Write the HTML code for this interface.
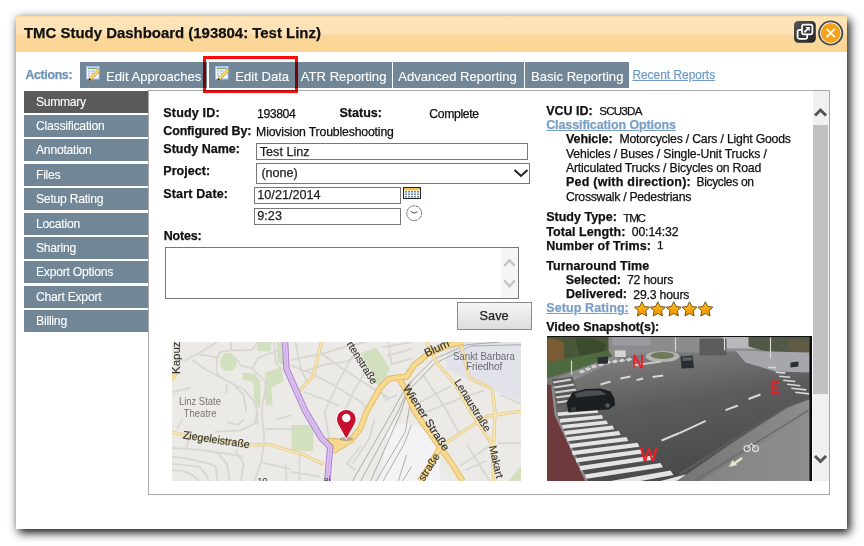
<!DOCTYPE html>
<html><head><meta charset="utf-8"><style>
html,body{margin:0;padding:0;width:864px;height:546px;overflow:hidden;background:#fff;}
body{position:relative;font-family:"Liberation Sans",sans-serif;}
.a{position:absolute;}
.t{position:absolute;line-height:1;white-space:nowrap;-webkit-text-stroke:0.25px currentColor;}
</style></head><body>
<div class="a" style="left:16px;top:16px;width:831px;height:513px;background:#fff;box-shadow:3px 4px 9px rgba(0,0,0,0.88),0 0 8px rgba(0,0,0,0.16);"></div>
<div class="a" style="left:16px;top:16px;width:831px;height:36px;background:linear-gradient(#fbd8a0 0px,#fde3b7 1.6px,#fce2b5 17px,#fbd79b 20.5px,#fad595 35px);"></div>
<div class="t" style="left:24.00px;top:25.55px;font-size:14.94px;font-weight:700;color:#111;">TMC Study Dashboard (193804: Test Linz)</div>
<svg class="a" style="left:794px;top:20.7px" width="22" height="22" viewBox="0 0 22 22">
<defs><linearGradient id="rg" x1="0" y1="0" x2="1" y2="1"><stop offset="0" stop-color="#5c5c5c"/><stop offset="0.5" stop-color="#383838"/><stop offset="1" stop-color="#262626"/></linearGradient></defs>
<rect x="0" y="0" width="21.8" height="21.7" rx="4.2" fill="url(#rg)"/>
<rect x="3.6" y="8.8" width="9.6" height="9" rx="1.8" fill="none" stroke="#fff" stroke-width="1.7"/>
<rect x="8" y="3.6" width="10.4" height="9.8" rx="1.8" fill="#3a3a3a" stroke="#fff" stroke-width="1.7"/>
<path d="M10.3 11.2 L14 7.6" fill="none" stroke="#fff" stroke-width="1.9"/>
<path d="M11.4 5.9 L15.8 5.9 L15.8 10.3 Z" fill="#fff"/>
</svg>
<svg class="a" style="left:818px;top:20px" width="26" height="26" viewBox="0 0 26 26">
<circle cx="12.7" cy="13" r="11.6" fill="#fff" stroke="#4a4a4a" stroke-width="1.9"/>
<circle cx="12.7" cy="13" r="9.9" fill="#f4a21c"/>
<path d="M8.6 8.9 L16.8 17.1 M16.8 8.9 L8.6 17.1" stroke="#fff" stroke-width="1.6"/>
</svg>
<div class="t" style="left:25.40px;top:69.19px;font-size:12.3px;font-weight:700;color:#6b93b8;letter-spacing:-0.3px;">Actions:</div>
<div class="a" style="left:80px;top:62px;width:127px;height:25.6px;background:#718797;"></div>
<svg class="a" style="left:86px;top:66.3px" width="15" height="15" viewBox="0 0 15 15">
<rect x="0.5" y="0.5" width="12.5" height="12.5" fill="#f8fbff" stroke="#a8c0ec" stroke-width="1"/>
<rect x="1.8" y="1.6" width="10" height="1.4" fill="#7aa868"/>
<g fill="#98acd4"><rect x="2.2" y="4.4" width="1.5" height="1.5"/><rect x="2.2" y="6.7" width="1.5" height="1.5"/><rect x="2.2" y="9" width="1.5" height="1.5"/></g>
<g fill="#b8c8e6"><rect x="4.8" y="4.4" width="4" height="1.4"/><rect x="4.8" y="6.7" width="3" height="1.4"/></g>
<rect x="1.5" y="3.6" width="10.5" height="0.6" fill="#c8d4ec"/>
<path d="M4.4 12.9 L12.4 4.9" stroke="#d89a3a" stroke-width="3.4" stroke-linecap="round"/>
<path d="M4.6 12.5 L12.2 5" stroke="#f6dc7c" stroke-width="1.8" stroke-linecap="round"/>
<path d="M2.6 14.6 L3.2 12 L5.2 14 Z" fill="#2a2a2a"/>
</svg>
<div class="t" style="left:106.00px;top:69.91px;font-size:13.1px;color:#fff;-webkit-text-stroke:0.1px #fff;">Edit Approaches</div>
<div class="a" style="left:209px;top:62px;width:89px;height:25.6px;background:#718797;"></div>
<svg class="a" style="left:215.3px;top:66.3px" width="15" height="15" viewBox="0 0 15 15">
<rect x="0.5" y="0.5" width="12.5" height="12.5" fill="#f8fbff" stroke="#a8c0ec" stroke-width="1"/>
<rect x="1.8" y="1.6" width="10" height="1.4" fill="#7aa868"/>
<g fill="#98acd4"><rect x="2.2" y="4.4" width="1.5" height="1.5"/><rect x="2.2" y="6.7" width="1.5" height="1.5"/><rect x="2.2" y="9" width="1.5" height="1.5"/></g>
<g fill="#b8c8e6"><rect x="4.8" y="4.4" width="4" height="1.4"/><rect x="4.8" y="6.7" width="3" height="1.4"/></g>
<rect x="1.5" y="3.6" width="10.5" height="0.6" fill="#c8d4ec"/>
<path d="M4.4 12.9 L12.4 4.9" stroke="#d89a3a" stroke-width="3.4" stroke-linecap="round"/>
<path d="M4.6 12.5 L12.2 5" stroke="#f6dc7c" stroke-width="1.8" stroke-linecap="round"/>
<path d="M2.6 14.6 L3.2 12 L5.2 14 Z" fill="#2a2a2a"/>
</svg>
<div class="t" style="left:235.30px;top:69.91px;font-size:13.1px;color:#fff;-webkit-text-stroke:0.1px #fff;">Edit Data</div>
<div class="a" style="left:298px;top:62px;width:94px;height:25.6px;background:#718797;"></div>
<div class="t" style="left:300.80px;top:69.91px;font-size:13.1px;color:#fff;-webkit-text-stroke:0.1px #fff;">ATR Reporting</div>
<div class="a" style="left:393px;top:62px;width:131px;height:25.6px;background:#718797;"></div>
<div class="t" style="left:398.20px;top:69.91px;font-size:13.1px;color:#fff;-webkit-text-stroke:0.1px #fff;">Advanced Reporting</div>
<div class="a" style="left:525px;top:62px;width:104px;height:25.6px;background:#718797;"></div>
<div class="t" style="left:531.00px;top:69.91px;font-size:13.1px;color:#fff;-webkit-text-stroke:0.1px #fff;">Basic Reporting</div>
<div class="t" style="left:632.40px;top:69.81px;font-size:11.92px;color:#6f9cc6;text-decoration:underline;">Recent Reports</div>
<div class="a" style="left:23.5px;top:90.6px;width:125px;height:22.1px;background:#5a5a5a;"></div>
<div class="t" style="left:36.00px;top:95.67px;font-size:12.2px;color:#fff;letter-spacing:-0.357px;-webkit-text-stroke:0.1px #fff;">Summary</div>
<div class="a" style="left:23.5px;top:115.0px;width:125px;height:22.1px;background:#718797;"></div>
<div class="t" style="left:36.00px;top:120.07px;font-size:12.2px;color:#fff;letter-spacing:-0.227px;-webkit-text-stroke:0.1px #fff;">Classification</div>
<div class="a" style="left:23.5px;top:139.4px;width:125px;height:22.1px;background:#718797;"></div>
<div class="t" style="left:36.00px;top:144.47px;font-size:12.2px;color:#fff;letter-spacing:-0.266px;-webkit-text-stroke:0.1px #fff;">Annotation</div>
<div class="a" style="left:23.5px;top:163.8px;width:125px;height:22.1px;background:#718797;"></div>
<div class="t" style="left:36.00px;top:168.87px;font-size:12.2px;color:#fff;letter-spacing:-0.264px;-webkit-text-stroke:0.1px #fff;">Files</div>
<div class="a" style="left:23.5px;top:188.2px;width:125px;height:22.1px;background:#718797;"></div>
<div class="t" style="left:36.00px;top:193.27px;font-size:12.2px;color:#fff;letter-spacing:-0.263px;-webkit-text-stroke:0.1px #fff;">Setup Rating</div>
<div class="a" style="left:23.5px;top:212.6px;width:125px;height:22.1px;background:#718797;"></div>
<div class="t" style="left:36.00px;top:217.67px;font-size:12.2px;color:#fff;letter-spacing:-0.270px;-webkit-text-stroke:0.1px #fff;">Location</div>
<div class="a" style="left:23.5px;top:237.0px;width:125px;height:22.1px;background:#718797;"></div>
<div class="t" style="left:36.00px;top:242.07px;font-size:12.2px;color:#fff;letter-spacing:-0.287px;-webkit-text-stroke:0.1px #fff;">Sharing</div>
<div class="a" style="left:23.5px;top:261.4px;width:125px;height:22.1px;background:#718797;"></div>
<div class="t" style="left:36.00px;top:266.47px;font-size:12.2px;color:#fff;letter-spacing:-0.254px;-webkit-text-stroke:0.1px #fff;">Export Options</div>
<div class="a" style="left:23.5px;top:285.8px;width:125px;height:22.1px;background:#718797;"></div>
<div class="t" style="left:36.00px;top:290.87px;font-size:12.2px;color:#fff;letter-spacing:-0.255px;-webkit-text-stroke:0.1px #fff;">Chart Export</div>
<div class="a" style="left:23.5px;top:310.2px;width:125px;height:22.1px;background:#718797;"></div>
<div class="t" style="left:36.00px;top:315.27px;font-size:12.2px;color:#fff;letter-spacing:-0.222px;-webkit-text-stroke:0.1px #fff;">Billing</div>
<div class="a" style="left:148px;top:90px;width:681.5px;height:404.5px;border:1px solid #a8a8a8;box-sizing:border-box;background:transparent;"></div>
<div class="t" style="left:163.30px;top:107.32px;font-size:12.5px;font-weight:700;color:#111;letter-spacing:0.180px;">Study ID:</div>
<div class="t" style="left:257.00px;top:107.53px;font-size:12.25px;color:#111;letter-spacing:-0.416px;">193804</div>
<div class="t" style="left:339.40px;top:107.32px;font-size:12.5px;font-weight:700;color:#111;letter-spacing:0.039px;">Status:</div>
<div class="t" style="left:429.20px;top:107.73px;font-size:12.25px;color:#111;letter-spacing:-0.347px;">Complete</div>
<div class="t" style="left:163.30px;top:124.82px;font-size:12.5px;font-weight:700;color:#111;letter-spacing:-0.167px;">Configured By:</div>
<div class="t" style="left:256.10px;top:125.53px;font-size:12.25px;color:#111;letter-spacing:-0.160px;">Miovision Troubleshooting</div>
<div class="t" style="left:163.30px;top:143.02px;font-size:12.5px;font-weight:700;color:#111;letter-spacing:0.030px;">Study Name:</div>
<div class="t" style="left:163.30px;top:164.52px;font-size:12.5px;font-weight:700;color:#111;letter-spacing:0.051px;">Project:</div>
<div class="t" style="left:163.30px;top:187.52px;font-size:12.5px;font-weight:700;color:#111;letter-spacing:0.149px;">Start Date:</div>
<div class="t" style="left:163.80px;top:230.02px;font-size:12.5px;font-weight:700;color:#111;letter-spacing:-0.219px;">Notes:</div>
<div class="a" style="left:256px;top:143.3px;width:271.5px;height:17px;border:1px solid #777;box-sizing:border-box;"></div>
<div class="t" style="left:259.80px;top:145.53px;font-size:12.6px;color:#222;">Test Linz</div>
<div class="a" style="left:256px;top:163px;width:274.3px;height:21px;border:1px solid #777;box-sizing:border-box;"></div>
<div class="t" style="left:261.40px;top:167.43px;font-size:12.6px;color:#222;">(none)</div>
<svg class="a" style="left:513px;top:168px" width="16" height="10" viewBox="0 0 16 10"><path d="M1.5 2 L8 8 L14.5 2" fill="none" stroke="#222" stroke-width="2"/></svg>
<div class="a" style="left:254.3px;top:187.1px;width:147.2px;height:17.2px;border:1px solid #777;box-sizing:border-box;"></div>
<div class="t" style="left:257.30px;top:189.17px;font-size:12.67px;color:#222;">10/21/2014</div>
<div class="a" style="left:254.3px;top:208.3px;width:147.2px;height:16.9px;border:1px solid #777;box-sizing:border-box;"></div>
<div class="t" style="left:257.30px;top:210.27px;font-size:12.67px;color:#222;">9:23</div>
<svg class="a" style="left:403px;top:187px" width="18" height="12" viewBox="0 0 18 12">
<rect x="0.5" y="0.5" width="17" height="11" fill="#f2f8fa" stroke="#222" stroke-width="1"/>
<rect x="1" y="1" width="16" height="2.4" fill="#f0c050"/>
<g fill="#6d8aa0"><rect x="2" y="4.0" width="2" height="1.5"/><rect x="5" y="4.0" width="2" height="1.5"/><rect x="8" y="4.0" width="2" height="1.5"/><rect x="11" y="4.0" width="2" height="1.5"/><rect x="14" y="4.0" width="2" height="1.5"/><rect x="2" y="6.5" width="2" height="1.5"/><rect x="5" y="6.5" width="2" height="1.5"/><rect x="8" y="6.5" width="2" height="1.5"/><rect x="11" y="6.5" width="2" height="1.5"/><rect x="14" y="6.5" width="2" height="1.5"/><rect x="2" y="9.0" width="2" height="1.5"/><rect x="5" y="9.0" width="2" height="1.5"/><rect x="8" y="9.0" width="2" height="1.5"/><rect x="11" y="9.0" width="2" height="1.5"/><rect x="14" y="9.0" width="2" height="1.5"/></g>
</svg>
<svg class="a" style="left:406px;top:204.5px" width="17" height="17" viewBox="0 0 17 17">
<circle cx="8.2" cy="8.2" r="7.4" fill="#fff" stroke="#555" stroke-width="0.9" stroke-dasharray="2.2 0.6"/>
<path d="M4.6 6.3 L8.2 8.2 L11.4 6.8" fill="none" stroke="#444" stroke-width="1"/>
</svg>
<div class="a" style="left:165.3px;top:247.3px;width:353.7px;height:52px;border:1px solid #777;box-sizing:border-box;"></div>
<div class="a" style="left:501.4px;top:248.3px;width:16.6px;height:50px;background:#f5f5f5;"></div>
<svg class="a" style="left:503px;top:257px" width="13" height="36" viewBox="0 0 13 36"><path d="M1.2 9 L6.5 3.3 L11.8 9 M1.2 23.5 L6.5 29.2 L11.8 23.5" fill="none" stroke="#c4c4c4" stroke-width="2.3"/></svg>
<div class="a" style="left:457.3px;top:302.2px;width:74.5px;height:28px;border:1px solid #8a8a8a;box-sizing:border-box;background:linear-gradient(#f6f6f6,#dedede);"></div>
<div class="t" style="left:479.60px;top:309.63px;font-size:12.72px;color:#222;">Save</div>
<div class="a" style="left:171.6px;top:342px;width:349.4px;height:138.8px;background:#ebe9e3;"></div>
<svg class="a" style="left:171.6px;top:342px" width="349.4" height="139" viewBox="171.6 342 349.4 139">
<rect x="171.6" y="342" width="349.4" height="139" fill="#ebeae6"/>
<!-- cemetery -->
<path d="M446 350 L462 342 L521 342 L521 401 L493 390 L469 380 L446 369 Z" fill="#e1e2ea"/>
<!-- station area -->
<path d="M388 425 L406 424 L437 432 L440 481 L380 481 Z" fill="#f3f3f5"/>
<!-- parks -->
<g fill="#d3e0bf">
<path d="M220 360 Q222 352 230 353 Q237 357 236 366 Q233 372 225 371 Q219 368 220 360 Z"/>
<path d="M241.8 372.5 L254.3 374 L259.9 380.9 L259.9 407.3 L254.3 407.3 L252.9 382.3 L241.8 379.5 Z"/>
<path d="M265.4 372.5 L280.7 367 L283.5 380.9 L271 387.8 L272.4 404.5 L265.4 405.9 L264 387.8 Z"/>
<path d="M257 342 L271 342 L270 351.7 L257 351 Z"/>
<path d="M276.6 342 L282 342 L283 365 L277 362 Z"/>
<path d="M291 425 L313 425 L313 451 L291 451 Z"/>
<path d="M360.4 353.1 L375.7 347.6 L389.6 368.4 L379.9 386.4 L374.3 382.3 L372.9 375.3 Z"/>
<path d="M508 481 L521 465 L521 481 Z"/>
</g>
<!-- minor roads -->
<g fill="none" stroke="#d8d7d3" stroke-width="1.8" stroke-linejoin="round">
<path d="M182 361.4 L198.8 353 L216.8 342"/>
<path d="M191.8 360 L205.7 369.8 L229.3 382.3 L243.2 389.2 L253 400.3 L257 412 L257.1 423.5 L254.3 423.5"/>
<path d="M198.8 354.5 L216.8 357.3 L220 352 L230.7 350.3 L230.7 342"/>
<path d="M216.8 357.3 L216 371 L218.5 376 L229 382"/>
<path d="M230.7 350.3 L252 350 L257 342"/>
<path d="M234.9 357.3 L240.4 365.6 L251.6 368.4 L261.3 378.1 L266.8 383.7 L262.7 400.3 L261.3 412 L264 438.8 L261.3 459.6 L254.3 481"/>
<path d="M251.6 368.4 L258.5 357.3 L271 353 L276.6 350.3"/>
<path d="M273.8 342 L275.2 362.8 L282.1 369.8"/>
<path d="M226.6 384 L225.6 394"/>
<path d="M232.1 383.7 L243.2 394.8 L246 412"/>
<path d="M171.6 447.8 L198.8 449.9 L229.3 454 L243.2 456.8"/>
<path d="M171.6 456.8 L184.9 458.2 L209.9 463.8 L215.4 466.6 L216.8 481"/>
<path d="M171.6 463.8 L198.8 466.6 L205.7 474.9 L208.5 481"/>
<path d="M171.6 470.7 L182.1 470.7 L191.8 474.9 L198.8 481"/>
<path d="M216.8 452.7 L226.6 463.8 L229.3 481"/>
<path d="M234.9 449.9 L243.2 463.8 L240.4 481"/>
<path d="M261.3 462.4 L291 469.3"/>
<path d="M284.9 463.8 L286.3 481"/>
<path d="M214 431.8 L240.4 430.4 L254.3 423.5 L257.1 411"/>
<path d="M226.6 422.1 L237.7 424.9 L243.2 419.3"/>
<path d="M176.6 429 L182.1 419.3"/>
<path d="M265.4 429 L291 429"/>
<path d="M276.6 419.3 L291 415.2"/>
<path d="M186.3 447.1 L189 436"/>
<path d="M171.6 392 L190 388"/>
<path d="M291 360 L324.3 353.1 L346.6 346.2 L366 342"/>
<path d="M295.2 342 L300.7 369.8 L307.7 383.7"/>
<path d="M291 365.6 L311.8 374 L332.7 385 L360.4 401.7 L368.8 411.4"/>
<path d="M320.2 353.1 L343.8 369.8 L371.6 387.8 L388.2 397.6"/>
<path d="M304.9 371.2 L325.7 364.2 L346.6 361.4 L356.3 355.9"/>
<path d="M352.1 355.9 L336.8 383.7 L324.3 412 L328.5 437.4"/>
<path d="M303.5 392 L329.9 401.7 L338.2 405.9"/>
<path d="M363.2 374 L352.1 393.4 L343.8 412"/>
<path d="M388.2 342 L391 364.2 L411 358.7"/>
<path d="M381.3 347.6 L411 342"/>
<path d="M386.8 355.9 L411 348.9"/>
<path d="M379.9 389.2 L385.4 400.3 L396.6 394.8"/>
<path d="M374.3 419.3 L368.8 438.8 L352.1 463.8"/>
<path d="M360.4 445.7 L346.6 463.8 L355 470"/>
<path d="M291 472 L318.8 476.3"/>
<path d="M299 455 L299 481"/>
<path d="M406 370 L423 362"/>
<path d="M422.1 374.2 L447.6 412"/>
<path d="M416.7 403.7 L450.3 386.3"/>
<path d="M426.1 412 L459.7 398.4 L483.9 390.3"/>
<path d="M446.3 411 L458.3 432.5"/>
<path d="M466.4 444.6 L489.2 481"/>
<path d="M459.7 466 L489.2 445.9"/>
<path d="M497.3 443.2 L521 443.2"/>
<path d="M465 470 L486 461"/>
<path d="M500 395 L521 404"/>
</g>
<!-- rail -->
<g fill="none" stroke="#9e9d9a" stroke-width="0.8">
<path d="M500 342 L466.4 344.7 L432.8 359.5 L406 386.3 L392.4 411 L352.1 481"/>
<path d="M521 344.7 L470.4 346 L434.2 363.5 L406 393 L398 411 L360.4 481"/>
<path d="M411 381 L399.3 415.2 L370.2 481"/>
<path d="M411 395 L404.9 431.8 L375.7 481"/>
<path d="M411 425 L403.5 444.3 L382.7 481"/>
<path d="M411 466.6 L402.1 481"/>
<path d="M406 455 L398 481"/>
</g>
<!-- thin yellow roads -->
<g fill="none" stroke-linecap="round" stroke-linejoin="round">
<g stroke="#e3c98a" stroke-width="3.2">
<path d="M320.9 342 L313.2 375.3 L299.3 390.6"/>
<path d="M171.6 431.8 L183.5 435.3 L248.8 445 L268.2 444.3 L291 451.3 L304.9 455.4 L321.6 463.8"/>
<path d="M426.1 342 L436.9 363.5 L453 382.3 L470.4 412 L491.9 444.6 L493 481"/>
<path d="M459.7 342 L469.1 378.2 L491.9 389 L494.6 412 L493.2 444.6"/>
<path d="M444.9 443.2 L486.5 416.4 L521 411"/>
</g>
<g stroke="#f8e6b0" stroke-width="1.8">
<path d="M320.9 342 L313.2 375.3 L299.3 390.6"/>
<path d="M171.6 431.8 L183.5 435.3 L248.8 445 L268.2 444.3 L291 451.3 L304.9 455.4 L321.6 463.8"/>
<path d="M426.1 342 L436.9 363.5 L453 382.3 L470.4 412 L491.9 444.6 L493 481"/>
<path d="M459.7 342 L469.1 378.2 L491.9 389 L494.6 412 L493.2 444.6"/>
<path d="M444.9 443.2 L486.5 416.4 L521 411"/>
</g>
<path d="M171.6 372 L179 372 L171.6 381 Z" fill="#f6dc96" stroke="#e3c98a" stroke-width="0.8"/>
</g>
<!-- main yellow road -->
<g fill="none" stroke-linejoin="round" stroke-linecap="butt">
<g stroke="#dfba66" stroke-width="6">
<path d="M462.4 342 L446.3 346 L427.5 354.1 L414 364.8 L406 376.9 L402.1 376.7 L388.2 378.8 L379.9 387.8 L366 412 L360.4 427.7 L350.7 440.2 L332.7 451.3"/>
<path d="M399.3 379.5 L404.9 389.2 L414 411 L439.6 447.2 L450.3 462 L462.4 481"/>
<path d="M439.6 447.2 L430.2 464.7 L419.4 481"/>
</g>
<path d="M327 438 L350.7 440.2 L332.7 452.7 Z" fill="#f6d98c" stroke="#dfba66" stroke-width="1"/>
<g stroke="#f7da8e" stroke-width="4.2">
<path d="M462.4 342 L446.3 346 L427.5 354.1 L414 364.8 L406 376.9 L402.1 376.7 L388.2 378.8 L379.9 387.8 L366 412 L360.4 427.7 L350.7 440.2 L332.7 451.3"/>
<path d="M399.3 379.5 L404.9 389.2 L414 411 L439.6 447.2 L450.3 462 L462.4 481"/>
<path d="M439.6 447.2 L430.2 464.7 L419.4 481"/>
</g>
</g>
<!-- purple highway -->
<path d="M284.7 342 L286 368.6 L304.9 411 L321.6 438.8 L329.9 447.1 L328.5 461 L327.1 481" fill="none" stroke="#a983cc" stroke-width="6.4" stroke-linejoin="round"/>
<path d="M284.7 342 L286 368.6 L304.9 411 L321.6 438.8 L329.9 447.1 L328.5 461 L327.1 481" fill="none" stroke="#dcc0f2" stroke-width="4.4" stroke-linejoin="round"/>
<path d="M284.7 342 L286 368.6 L304.9 411 L321.6 438.8 L329.9 447.1 L328.5 461 L327.1 481" fill="none" stroke="#c4a4e2" stroke-width="0.7" stroke-linejoin="round"/>
<!-- labels -->
<g font-family="Liberation Sans, sans-serif">
<text x="178.5" y="405.4" fill="#7a766e" font-size="10.3" textLength="42" lengthAdjust="spacingAndGlyphs">Linz State</text>
<text x="183.2" y="417" fill="#7a766e" font-size="10.3" textLength="33" lengthAdjust="spacingAndGlyphs">Theatre</text>
<text x="452.5" y="359.6" fill="#6a6a72" font-size="10.8" textLength="62" lengthAdjust="spacingAndGlyphs">Sankt Barbara</text>
<text x="465.5" y="369.8" fill="#6a6a72" font-size="10.8" textLength="36.5" lengthAdjust="spacingAndGlyphs">Friedhof</text>
</g>
<g font-family="Liberation Sans, sans-serif" fill="#38362f">
<text transform="translate(182,438.5) rotate(8.3)" font-size="11" textLength="67.5" lengthAdjust="spacingAndGlyphs" stroke="#38362f" stroke-width="0.15">Ziegeleistraße</text>
<text transform="translate(426,357) rotate(-25)" font-size="11.5" stroke="#38362f" stroke-width="0.2">Blum</text>
<text transform="translate(402,388) rotate(57)" font-size="11" textLength="76" lengthAdjust="spacingAndGlyphs" stroke="#38362f" stroke-width="0.2">Wiener Straße</text>
<text transform="translate(453.5,382) rotate(58)" font-size="10.6" stroke="#38362f" stroke-width="0.12">Lenaustraße</text>
<text transform="translate(423.5,482) rotate(-58)" font-size="10.8" stroke="#38362f" stroke-width="0.12">straße</text>
<text transform="translate(346,344) rotate(58)" font-size="10.6" stroke="#38362f" stroke-width="0.12">rtenstraße</text>
<text transform="translate(488.5,446.5) rotate(77)" font-size="10.8" stroke="#38362f" stroke-width="0.12">Makart</text>
<text transform="translate(180,374) rotate(-90)" font-size="11.5" stroke="#38362f" stroke-width="0.15">Kapuz</text>
<text x="323" y="483" font-size="9">ai</text>
<text x="257" y="484" font-size="9">10</text>
</g>
<!-- pin -->
<ellipse cx="346" cy="439" rx="7" ry="2.2" fill="#777" opacity="0.45"/>
<path d="M345.9 439.5 L337.6 424.5 A9.8 9.8 0 1 1 354.2 424.5 Z" fill="#c8102e" stroke="#fff" stroke-width="1"/>
<circle cx="345.9" cy="418" r="4.2" fill="#fff"/>
</svg>
<div class="t" style="left:546.20px;top:104.72px;font-size:12.5px;font-weight:700;color:#111;letter-spacing:-0.005px;">VCU ID:</div>
<div class="t" style="left:599.20px;top:105.48px;font-size:11.6px;color:#111;letter-spacing:-0.772px;">SCU3DA</div>
<div class="t" style="left:546.20px;top:118.52px;font-size:12.5px;font-weight:700;color:#7aa0c6;letter-spacing:-0.103px;text-decoration:underline;">Classification Options</div>
<div class="t" style="left:566.00px;top:133.02px;font-size:12.5px;font-weight:700;color:#111;letter-spacing:-0.093px;">Vehicle:</div>
<div class="t" style="left:619.40px;top:133.23px;font-size:12.25px;color:#111;letter-spacing:-0.197px;">Motorcycles / Cars / Light Goods</div>
<div class="t" style="left:566.00px;top:147.73px;font-size:12.25px;color:#111;letter-spacing:-0.145px;">Vehicles / Buses / Single-Unit Trucks /</div>
<div class="t" style="left:566.00px;top:162.23px;font-size:12.25px;color:#111;letter-spacing:-0.192px;">Articulated Trucks / Bicycles on Road</div>
<div class="t" style="left:566.00px;top:175.72px;font-size:12.5px;font-weight:700;color:#111;letter-spacing:0.228px;">Ped (with direction):</div>
<div class="t" style="left:696.50px;top:176.14px;font-size:12.0px;color:#111;letter-spacing:-0.329px;">Bicycles on</div>
<div class="t" style="left:566.00px;top:190.83px;font-size:12.25px;color:#111;letter-spacing:-0.277px;">Crosswalk / Pedestrians</div>
<div class="t" style="left:546.20px;top:211.22px;font-size:12.5px;font-weight:700;color:#111;letter-spacing:0.009px;">Study Type:</div>
<div class="t" style="left:623.30px;top:211.98px;font-size:11.6px;color:#111;letter-spacing:-1.213px;">TMC</div>
<div class="t" style="left:546.20px;top:226.02px;font-size:12.5px;font-weight:700;color:#111;letter-spacing:0.081px;">Total Length:</div>
<div class="t" style="left:631.70px;top:226.23px;font-size:12.25px;color:#111;letter-spacing:-0.112px;">00:14:32</div>
<div class="t" style="left:546.20px;top:239.82px;font-size:12.5px;font-weight:700;color:#111;letter-spacing:0.081px;">Number of Trims:</div>
<div class="t" style="left:657.00px;top:240.41px;font-size:11.8px;color:#111;">1</div>
<div class="t" style="left:546.20px;top:259.82px;font-size:12.5px;font-weight:700;color:#111;letter-spacing:0.098px;">Turnaround Time</div>
<div class="t" style="left:565.70px;top:273.62px;font-size:12.5px;font-weight:700;color:#111;letter-spacing:-0.035px;">Selected:</div>
<div class="t" style="left:627.00px;top:273.83px;font-size:12.25px;color:#111;letter-spacing:-0.196px;">72 hours</div>
<div class="t" style="left:566.00px;top:288.32px;font-size:12.5px;font-weight:700;color:#111;letter-spacing:0.062px;">Delivered:</div>
<div class="t" style="left:633.30px;top:288.53px;font-size:12.25px;color:#111;letter-spacing:-0.188px;">29.3 hours</div>
<div class="t" style="left:546.20px;top:302.02px;font-size:12.5px;font-weight:700;color:#7aa0c6;letter-spacing:0.113px;text-decoration:underline;">Setup Rating:</div>
<svg class="a" style="left:634.2px;top:301px" width="82" height="17" viewBox="0 0 82 17"><defs><linearGradient id="sg" x1="0" y1="0" x2="0" y2="1"><stop offset="0" stop-color="#ffc21a"/><stop offset="1" stop-color="#ee9200"/></linearGradient></defs><path transform="translate(0.00,0)" d="M8.00 0.70 L10.29 5.44 L15.51 6.16 L11.71 9.81 L12.64 14.99 L8.00 12.50 L3.36 14.99 L4.29 9.81 L0.49 6.16 L5.71 5.44 Z" fill="url(#sg)" stroke="#6a4a10" stroke-width="0.9" stroke-linejoin="round"/><path transform="translate(15.85,0)" d="M8.00 0.70 L10.29 5.44 L15.51 6.16 L11.71 9.81 L12.64 14.99 L8.00 12.50 L3.36 14.99 L4.29 9.81 L0.49 6.16 L5.71 5.44 Z" fill="url(#sg)" stroke="#6a4a10" stroke-width="0.9" stroke-linejoin="round"/><path transform="translate(31.70,0)" d="M8.00 0.70 L10.29 5.44 L15.51 6.16 L11.71 9.81 L12.64 14.99 L8.00 12.50 L3.36 14.99 L4.29 9.81 L0.49 6.16 L5.71 5.44 Z" fill="url(#sg)" stroke="#6a4a10" stroke-width="0.9" stroke-linejoin="round"/><path transform="translate(47.55,0)" d="M8.00 0.70 L10.29 5.44 L15.51 6.16 L11.71 9.81 L12.64 14.99 L8.00 12.50 L3.36 14.99 L4.29 9.81 L0.49 6.16 L5.71 5.44 Z" fill="url(#sg)" stroke="#6a4a10" stroke-width="0.9" stroke-linejoin="round"/><path transform="translate(63.40,0)" d="M8.00 0.70 L10.29 5.44 L15.51 6.16 L11.71 9.81 L12.64 14.99 L8.00 12.50 L3.36 14.99 L4.29 9.81 L0.49 6.16 L5.71 5.44 Z" fill="url(#sg)" stroke="#6a4a10" stroke-width="0.9" stroke-linejoin="round"/></svg>
<div class="t" style="left:546.20px;top:321.22px;font-size:12.5px;font-weight:700;color:#111;letter-spacing:-0.039px;">Video Snapshot(s):</div>
<div class="a" style="left:546.5px;top:335.6px;width:265.5px;height:145px;background:#555;"></div>
<svg class="a" style="left:546.5px;top:335.5px" width="265.5" height="145" viewBox="546.5 335.5 265.5 145">
<defs>
<linearGradient id="road" x1="0" y1="0" x2="0.3" y2="1"><stop offset="0" stop-color="#929292"/><stop offset="0.22" stop-color="#7c7c7c"/><stop offset="0.55" stop-color="#5c5c5c"/><stop offset="1" stop-color="#4a4a4c"/></linearGradient>
<linearGradient id="walk" x1="0" y1="0" x2="1" y2="0"><stop offset="0" stop-color="#747474"/><stop offset="1" stop-color="#8e8e8e"/></linearGradient>
</defs>
<!-- base: road -->
<rect x="546.5" y="335.5" width="265.5" height="145" fill="url(#road)"/>
<!-- top band buildings -->
<path d="M600 335.5 H812 V352 L780 358 L760 350 L700 352 L660 352 L620 356 L600 360 Z" fill="#8c8c8e"/>
<path d="M722 336 L769 336 L769 348 L722 348 Z" fill="#b8b8ba"/>
<path d="M699 338 L726 338 L726 355 L699 355 Z" fill="#5c5c5c"/>
<path d="M612 336 L650 336 L650 345 L612 345 Z" fill="#9a9aa0"/>
<path d="M748 336 L809 336 L809 362 L790 358 L770 352 L748 346 Z" fill="#505846"/><path d="M785 340 Q800 336 809 342 L809 356 L790 352 Z" fill="#5e5a44"/>
<!-- plaza light ground right -->
<path d="M735 350 L809 352 L809 372 L775 371 L745 362 Z" fill="#a6a6ac"/>
<!-- roundabout island -->
<ellipse cx="662" cy="356" rx="17" ry="5.5" fill="#b4b4b4"/>
<ellipse cx="662" cy="355" rx="12" ry="3.5" fill="#6e7a5a"/>
<!-- trees left -->
<path d="M546.5 335.5 H608 L608 352 L590 357 L570 362 L546.5 366 Z" fill="#4a5638"/>
<path d="M547 339 Q556 336 563 342 L564 362 L547 366 Z" fill="#7a5c34"/>
<path d="M575 338 Q595 335 606 345 L600 356 L580 358 Z" fill="#3c4a2e"/>
<!-- grass -->
<path d="M546.5 362 L608 350 L612 356 L580 368 L546.5 378 Z" fill="#4e6a40"/>
<!-- sidewalk strip -->
<path d="M550 380 L580 368 L612 356 L620 358 L590 372 L560 386 Z" fill="#8a8a8a"/>
<!-- crosswalk N -->
<g fill="#d4d4d4">
<path d="M578 371 L582 369 L585 371 L581 373 Z"/>
<path d="M584 368.5 L588 366.5 L591 368.5 L587 370.5 Z"/>
<path d="M590 366 L594 364 L597 366 L593 368 Z"/>
<path d="M597 364 L601 362 L604 364 L600 366 Z"/>
<path d="M604 362 L608 360 L611 362 L607 364 Z"/>
<path d="M611 361 L615 359 L618 361 L614 363 Z"/>
<path d="M618 360 L622 358 L625 360 L621 362 Z"/>
<path d="M625 359 L629 357 L632 359 L628 361 Z"/>
<path d="M632 364 L660 360 L661 362 L633 366 Z" fill="#c8c8c8"/>
</g>
<!-- left checker crosswalk -->
<path d="M551 379 L572 376 L580 402 L556 406 Z" fill="#5a5a5a"/>
<g fill="#d0d0d0">
<path d="M552 381 L570 378 L571 380 L553 383 Z"/>
<path d="M553 386 L573 383 L574 385 L554 388 Z"/>
<path d="M554 391 L575 388 L576 390 L555 393 Z"/>
<path d="M555 396 L577 393 L578 395 L556 398 Z"/>
<path d="M556 401 L579 398 L580 400 L557 403 Z"/>
</g>
<!-- red sidewalk -->
<path d="M546.5 384 L552 385 L555.2 414.2 L586 480.5 L546.5 480.5 Z" fill="#6e3a3c"/>
<path d="M552 385 L555.2 414.2 L586 480.5" fill="none" stroke="#8a8a8a" stroke-width="2.5"/>
<!-- crosswalk W stripes -->
<g fill="#e4e4e4">
<path d="M556.8 412 L596.8 408.8 L597.8 412.2 L557.6 415.6 Z"/>
<path d="M559 418.5 L601.4 414.5 L602.6 418 L559.8 422.2 Z"/>
<path d="M561.4 424.5 L606 420 L607.4 423.6 L562.2 428.3 Z"/>
<path d="M563.7 430.5 L612.2 425 L613.6 428.8 L564.5 434.4 Z"/>
<path d="M566 436.8 L618.4 430.6 L620 434.4 L566.8 440.8 Z"/>
<path d="M569 443.5 L626 436.5 L627.8 440.5 L569.8 447.6 Z"/>
<path d="M571.4 450.5 L637 442.2 L639 446.2 L572.2 454.7 Z"/>
<path d="M575 457.8 L640 449 L642 453 L576 462 Z"/>
<path d="M579 465.6 L652 455 L654 459 L580 470 Z"/>
<path d="M584 474 L660 462.5 L662.5 466.7 L586 478.2 Z"/>
<path d="M610 480.5 L670 470 L673 474.5 L640 480.5 Z"/>
<path d="M660 480.5 L685 474 L688 478 L678 480.5 Z"/>
</g>
<!-- sidewalk bottom right -->
<path d="M812 398 L812 480.5 L676 480.5 L786.7 405 Z" fill="url(#walk)"/>
<path d="M679 474 L786.7 405.5 L812 396" fill="none" stroke="#5a5a5a" stroke-width="3"/>
<path d="M694.4 480.5 L808.2 409.6" fill="none" stroke="#6c6c6c" stroke-width="1.5"/>
<path d="M700 480.5 L812 412 L812 480.5 Z" fill="#8e8e8e" opacity="0.6"/>
<!-- crosswalk E -->
<g fill="#d8d8d8">
<path d="M768 366 L776 366.5 L775.5 368 L767.5 367.5 Z"/>
<path d="M775.5 371 L785 371.8 L784.5 373.4 L775 372.6 Z"/>
<path d="M779 375 L790 376 L789.5 377.6 L778.5 376.6 Z"/>
<path d="M783 379 L795 380.2 L794.5 381.8 L782.5 380.6 Z"/>
<path d="M787 383 L800 384.4 L799.5 386 L786.5 384.6 Z"/>
<path d="M791 387 L806 388.6 L805.5 390.2 L790.5 388.6 Z"/>
<path d="M795 391 L809 392.6 L808.5 394.2 L794.5 392.6 Z"/>
</g>
<!-- lane dashes -->
<g stroke="#d8d8d8" stroke-width="2" stroke-linecap="butt">
<path d="M661 440 L679 432.5"/>
<path d="M679 432.7 L705.2 420.4"/>
<path d="M725 409.6 L737.5 405"/>
<path d="M748 398.5 L760 394"/>
<path d="M636 379.6 L642.7 378"/>
<path d="M652 376.5 L662.7 375"/>
<path d="M600 384 L610 381"/>
<path d="M620 378 L630 376"/>
</g>
<!-- car 1 -->
<path d="M566 402 L572 392 L585 388.5 L600 388 L610 391 L614 398 L614.5 405 L608 409 L580 411 L568 412 Z" fill="#1c1f22"/>
<path d="M574 393 L586 390 L600 390 L606 394 L576 397 Z" fill="#4a5056"/>
<circle cx="573" cy="409" r="2.5" fill="#3a3a3a"/>
<circle cx="607" cy="405" r="2.2" fill="#555"/>
<!-- car 2 -->
<path d="M680 356 L692 355 L693.5 367.5 L681 368 Z" fill="#2a2e32"/>
<path d="M682 357 L691 356.5 L691.5 360 L682 360.5 Z" fill="#5a6066"/>
<!-- small cars top -->
<path d="M614 350 L625 349.7 L625.5 356.4 L614.5 356.6 Z" fill="#d4d4d4"/>
<path d="M597 357 L607.5 356 L607.5 363 L597 363.5 Z" fill="#2a2e32"/>
<path d="M790 362 L798 361 L798 366 L790 367 Z" fill="#2a2e32"/>
<!-- poles -->
<g stroke="#d8d8d8" stroke-width="1.2">
<path d="M571 360 V374"/><path d="M724 337 V350"/><path d="M770 337 V358"/><path d="M675 337 V351"/>
</g>
<!-- bike + arrow -->
<g fill="none" stroke="#e6e6e6" stroke-width="1.1">
<circle cx="746.5" cy="448" r="3"/><circle cx="755" cy="448" r="3"/><path d="M746.5 448 L751 443 L755 448"/>
</g>
<path d="M741.5 457.5 L734 463" stroke="#e6e6c8" stroke-width="2.2"/>
<path d="M728.5 466.5 L732 459.5 L736.5 464.5 Z" fill="#e6e6c8"/>
<!-- letters -->
<g font-family="Liberation Sans, sans-serif" fill="#ee1c24" stroke="#ee1c24" stroke-width="0.6">
<text x="631.5" y="367.5" font-size="18" textLength="12" lengthAdjust="spacingAndGlyphs">N</text>
<text x="769.5" y="393.8" font-size="18" textLength="9.5" lengthAdjust="spacingAndGlyphs">E</text>
<text x="639.8" y="460.5" font-size="18" textLength="17" lengthAdjust="spacingAndGlyphs">W</text>
</g>
<!-- black edges -->
<rect x="546.5" y="335.5" width="265.5" height="1" fill="#111"/>
<rect x="809" y="335.5" width="3" height="145" fill="#0c0c0c"/>
</svg>
<div class="a" style="left:812.5px;top:91px;width:16.5px;height:389.7px;background:#f0f0f0;"></div>
<div class="a" style="left:813px;top:125.1px;width:15px;height:269.4px;background:#c1c1c1;"></div>
<svg class="a" style="left:813px;top:106px" width="15" height="12" viewBox="0 0 15 12"><path d="M2 9.5 L7.5 4 L13 9.5" fill="none" stroke="#555" stroke-width="3"/></svg>
<svg class="a" style="left:813px;top:453px" width="15" height="12" viewBox="0 0 15 12"><path d="M2 3 L7.5 8.5 L13 3" fill="none" stroke="#555" stroke-width="3"/></svg>
<div class="a" style="left:203.4px;top:56.4px;width:94.6px;height:36.3px;border:3.8px solid #ff0a0a;box-sizing:border-box;mix-blend-mode:multiply;"></div>
</body></html>
